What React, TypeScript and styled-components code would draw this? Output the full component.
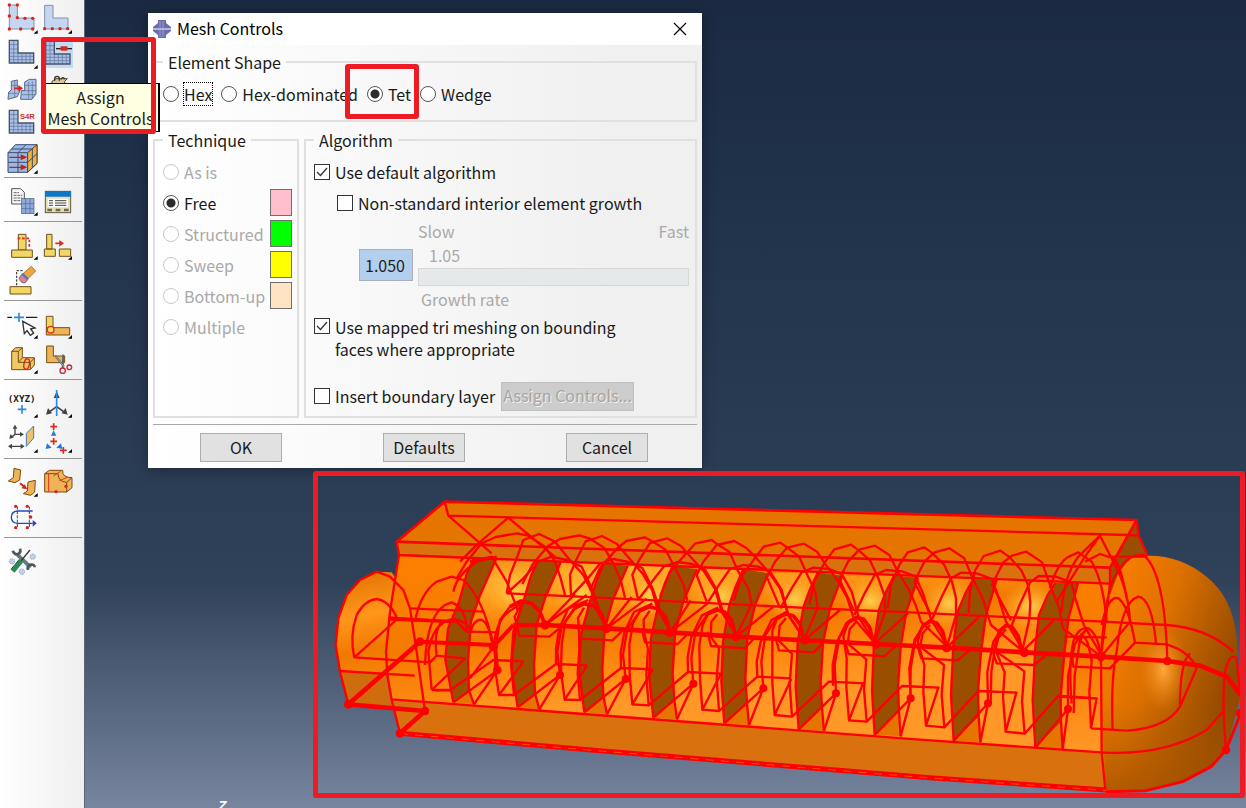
import React from 'react';
import styled, { createGlobalStyle, css } from 'styled-components';

const GlobalStyle = createGlobalStyle`
  * { box-sizing: border-box; }
  body {
    margin: 0;
    font-family: 'Noto Sans CJK SC', 'Noto Sans', sans-serif;
    font-size: 16px;
    line-height: 22px;
    color: #1a1a1a;
  }
  button, input { font: inherit; color: inherit; }
`;

const RED = '#ed1c24';
const EDGE = '#ff0000';

/* ---------- shell ---------- */

const Screen = styled.div`
  position: relative;
  display: flex;
  height: 100vh;
  overflow: hidden;
`;

const Toolbar = styled.nav`
  flex: none;
  width: 85px;
  padding: 0 4px;
  background: linear-gradient(90deg, #ffffff, #efefef);
  border-right: 1px solid #5b6577;
`;

const ToolGroup = styled.div<{ $first?: boolean; $last?: boolean }>`
  display: grid;
  grid-template-columns: 36px 36px;
  grid-auto-rows: 35px;
  width: 78px;
  padding: ${(p) => (p.$first ? '1px 0' : '5px 0 3px')};
  border-bottom: ${(p) => (p.$last ? 'none' : '1px solid #979797')};
`;

const ToolButton = styled.button<{ $active?: boolean }>`
  padding: 0;
  border: 0;
  background: ${(p) =>
    p.$active ? 'linear-gradient(#bfdcf5, #bfdcf5) 5px 4px / 28px 28px no-repeat' : 'none'};
`;

const ToolSvg = styled.svg`
  display: block;
  width: 36px;
  height: 35px;
`;

const Viewport = styled.main`
  position: relative;
  flex: 1;
  background: linear-gradient(180deg, #1b2a42 0%, #1f3049 20%, #2d3f57 65%, #304259 72%, #53637b 86%, #77869e 100%);
`;

const ModelSvg = styled.svg`
  position: absolute;
  left: 225px;
  top: 465px;
  width: 936px;
  height: 335px;
`;

const AxisLabel = styled.span`
  position: absolute;
  left: 133px;
  top: 797px;
  color: #f4f6fa;
  font: italic 700 14px/18px 'Liberation Sans', sans-serif;
`;

const Callout = styled.div<{ $x: number; $y: number; $w: number; $h: number }>`
  position: absolute;
  left: ${(p) => p.$x}px;
  top: ${(p) => p.$y}px;
  width: ${(p) => p.$w}px;
  height: ${(p) => p.$h}px;
  border: 5px solid ${RED};
  border-radius: 3px;
  pointer-events: none;
`;

const Tooltip = styled.div`
  position: absolute;
  left: 42px;
  top: 83px;
  width: 118px;
  padding: 3px 2px 2px;
  border: 1px solid #000;
  border-right-width: 2px;
  background: #ffffe1;
  text-align: center;
  line-height: 21px;
  white-space: nowrap;
`;

/* ---------- dialog ---------- */

const Dialog = styled.section`
  position: absolute;
  left: 63px;
  top: 13px;
  width: 554px;
  background: linear-gradient(90deg, #ffffff 0%, #fbfbfb 25%, #f0f0f0 85%);
  box-shadow: 0 2px 12px rgba(0, 0, 0, 0.35);
`;

const TitleBar = styled.header`
  display: flex;
  align-items: center;
  gap: 6px;
  height: 32px;
  padding: 0 15px 0 5px;
  background: #fff;
  color: #000;
`;

const Title = styled.h1`
  flex: 1;
  margin: 0;
  padding-bottom: 3px;
  font-size: 16px;
  font-weight: 400;
`;

const CloseButton = styled.button`
  display: flex;
  padding: 0;
  border: 0;
  background: none;
`;

const Body = styled.form`
  padding: 6px 5px;
`;

const Columns = styled.div`
  display: flex;
  gap: 5px;
  margin-top: 7px;
`;

const Group = styled.fieldset<{ $h: number; $w?: number }>`
  flex: ${(p) => (p.$w ? 'none' : '1')};
  width: ${(p) => (p.$w ? `${p.$w}px` : 'auto')};
  height: ${(p) => p.$h}px;
  min-width: 0;
  margin: 0;
  padding: 0 6px 0 9px;
  border: 2px solid #e0e0e0;
`;

const Legend = styled.legend`
  margin-left: -1px;
  padding: 0 5px;
`;

const ShapeRow = styled.div`
  display: flex;
  gap: 9px;
  margin-top: 10px;
  margin-left: -1px;
`;

const Choice = styled.label<{ $off?: boolean; $top?: boolean }>`
  display: flex;
  align-items: ${(p) => (p.$top ? 'flex-start' : 'center')};
  gap: 5px;
  color: ${(p) => (p.$off ? '#a9a9a9' : 'inherit')};
  white-space: nowrap;
`;

const FocusText = styled.span<{ $focus?: boolean }>`
  ${(p) => p.$focus && css`outline: 1px dotted #000;`}
`;

const Radio = styled.input.attrs({ type: 'radio' })`
  appearance: none;
  flex: none;
  width: 16px;
  height: 16px;
  margin: 0;
  border: 1px solid #555;
  border-radius: 50%;
  background: #fff;
  &:checked { background: radial-gradient(circle, #2b2b2b 4px, #fff 5px); }
  &:disabled { border-color: #c8c8c8; }
`;

const CheckBox = styled.input.attrs({ type: 'checkbox' })`
  appearance: none;
  flex: none;
  width: 16px;
  height: 16px;
  margin: 0;
  border: 1px solid #333;
  background: #fff;
`;

const CheckWrap = styled.span<{ $top?: boolean }>`
  display: grid;
  flex: none;
  margin-top: ${(p) => (p.$top ? '2px' : '0')};
  > * { grid-area: 1 / 1; }
`;

const TechRow = styled.div`
  display: flex;
  align-items: center;
  justify-content: space-between;
  height: 31px;
  margin-left: -1px;
`;

const TechList = styled.div`
  margin-top: 5px;
`;

const Swatch = styled.span<{ $c: string }>`
  width: 22px;
  height: 27px;
  margin-right: -1px;
  border: 1px solid #6f6f6f;
  background: ${(p) => p.$c};
`;

const AlgoRow = styled.div<{ $indent?: boolean; $h: number }>`
  display: flex;
  align-items: center;
  gap: 6px;
  height: ${(p) => p.$h}px;
  margin-left: ${(p) => (p.$indent ? '22px' : '-1px')};
`;

const Growth = styled.div`
  display: grid;
  grid-template-columns: 54px 1fr;
  column-gap: 5px;
  align-items: start;
  margin: 2px 0 0 44px;
  color: #a9a9a9;
`;

const GrowthValue = styled.input`
  width: 54px;
  height: 32px;
  margin-top: 29px;
  padding: 0 5px;
  border: 1px solid #a8b0ba;
  background: #b3cfee;
  color: #222;
`;

const Scale = styled.div`
  display: flex;
  flex-direction: column;
`;

const ScaleEnds = styled.div`
  display: flex;
  justify-content: space-between;
`;

const ScaleValue = styled.output`
  padding-left: 11px;
  line-height: 26px;
`;

const Range = styled.input.attrs({ type: 'range' })`
  appearance: none;
  width: 100%;
  height: 18px;
  margin: 0 0 2px;
  border: 1px solid #d6d8d8;
  background: #e5e9e9;
  &::-webkit-slider-thumb { appearance: none; width: 0; height: 0; }
`;

const ScaleName = styled.label`
  padding-left: 3px;
`;

const Mapped = styled.div`
  margin: 6px 0 0 -1px;
`;

const Push = styled.button<{ $wide?: boolean }>`
  width: ${(p) => (p.$wide ? '133px' : '82px')};
  height: 29px;
  padding: 0 0 2px;
  border: 1px solid #adadad;
  background: #e1e1e1;
  white-space: nowrap;
  &:disabled {
    border-color: #bfbfbf;
    background: #cccccc;
    color: #a5a5a5;
    text-shadow: 1px 1px 0 #f2f2f2;
  }
`;

const Footer = styled.footer`
  display: flex;
  justify-content: space-between;
  margin-top: 6px;
  padding: 8px 49px 0 47px;
  border-top: 1px solid #a8a8a8;
`;

function Check({ id, checked, top }: { id: string; checked?: boolean; top?: boolean }) {
  return (
    <CheckWrap $top={top}>
      <CheckBox id={id} defaultChecked={checked} />
      {checked && (
        <svg width="16" height="16" viewBox="0 0 16 16" pointerEvents="none">
          <path d="M3 8l3.500 3.500L13 4" fill="none" stroke="#333" strokeWidth="1.300" />
        </svg>
      )}
    </CheckWrap>
  );
}

const techniques = [
  { name: 'As is', off: true },
  { name: 'Free', color: '#ffc0cb' },
  { name: 'Structured', off: true, color: '#00ff00' },
  { name: 'Sweep', off: true, color: '#ffff00' },
  { name: 'Bottom-up', off: true, color: '#ffe4c4' },
  { name: 'Multiple', off: true },
];

function MeshControls() {
  return (
    <Dialog role="dialog" aria-label="Mesh Controls">
      <TitleBar>
        <svg width="18" height="18" viewBox="0 0 18 18">
          <path d="M5 0h8v3l5 4v1.400H0V7l5-4z" fill="#6d6cae" />
          <path d="M0 9.600h18V11l-5 4v3H5v-3l-5-4z" fill="#6d6cae" />
          <path d="M7 1v7M7 10v7M10 1v7M10 10v7" stroke="#9d9ccc" />
        </svg>
        <Title>Mesh Controls</Title>
        <CloseButton aria-label="Close">
          <svg width="14" height="14" viewBox="0 0 14 14">
            <path d="M1 1l12 12M13 1L1 13" stroke="#000" strokeWidth="1.200" />
          </svg>
        </CloseButton>
      </TitleBar>
      <Body>
        <Group $h={71}>
          <Legend>Element Shape</Legend>
          <ShapeRow>
            <Choice><Radio name="shape" /><FocusText $focus>Hex</FocusText></Choice>
            <Choice><Radio name="shape" />Hex-dominated</Choice>
            <Choice><Radio name="shape" defaultChecked />Tet</Choice>
            <Choice><Radio name="shape" />Wedge</Choice>
          </ShapeRow>
        </Group>
        <Columns>
          <Group $h={289} $w={146}>
            <Legend>Technique</Legend>
            <TechList>
              {techniques.map((t) => (
                <TechRow key={t.name}>
                  <Choice $off={t.off}>
                    <Radio name="technique" disabled={t.off} defaultChecked={t.name === 'Free'} />
                    {t.name}
                  </Choice>
                  {t.color && <Swatch $c={t.color} />}
                </TechRow>
              ))}
            </TechList>
          </Group>
          <Group $h={289}>
            <Legend>Algorithm</Legend>
            <TechList>
              <AlgoRow $h={31}>
                <Choice><Check id="default-algorithm" checked />Use default algorithm</Choice>
              </AlgoRow>
              <AlgoRow $h={31} $indent>
                <Choice><Check id="growth" />Non-standard interior element growth</Choice>
              </AlgoRow>
            </TechList>
            <Growth>
              <GrowthValue aria-label="Growth rate value" defaultValue="1.050" />
              <Scale>
                <ScaleEnds><span>Slow</span><span>Fast</span></ScaleEnds>
                <ScaleValue>1.05</ScaleValue>
                <Range id="rate" disabled defaultValue={5} />
                <ScaleName htmlFor="rate">Growth rate</ScaleName>
              </Scale>
            </Growth>
            <Mapped>
              <Choice $top>
                <Check id="mapped" checked top />
                <span>Use mapped tri meshing on bounding<br />faces where appropriate</span>
              </Choice>
            </Mapped>
            <AlgoRow $h={72}>
              <Choice><Check id="boundary" />Insert boundary layer</Choice>
              <Push type="button" $wide disabled>Assign Controls...</Push>
            </AlgoRow>
          </Group>
        </Columns>
        <Footer>
          <Push type="button">OK</Push>
          <Push type="button">Defaults</Push>
          <Push type="button">Cancel</Push>
        </Footer>
      </Body>
    </Dialog>
  );
}

/* ---------- toolbar icons ---------- */

function Tool({ label, x, y, menu, active, children }: {
  label: string; x: number; y: number; menu?: boolean; active?: boolean; children?: React.ReactNode;
}) {
  const mx = x + (x > 100 ? 96 : 101);
  const my = y + 98;
  return (
    <ToolButton aria-label={label} $active={active}>
      <ToolSvg viewBox={`${x} ${y} 108 105`}>
        {children}
        {menu && <path d={`M${mx} ${my}v-11l-12 11z`} fill="#000" />}
      </ToolSvg>
    </ToolButton>
  );
}

const Dots = ({ at }: { at: number[][] }) => (
  <>{at.map(([x, y]) => <circle key={`${x} ${y}`} cx={x} cy={y} r="5" fill="#d8231a" />)}</>
);

const MeshL = ({ x, y }: { x: number; y: number }) => (
  <g transform={`translate(${x} ${y})`}>
    <path d="M0 0h26v38h47v30H0z" fill="#a9c0e8" />
    <path d="M13 0v68M26 38v30M38 38v30M50 38v30M62 38v30M0 13h26M0 26h26M0 38h26M0 48h73M0 58h73" stroke="#5a7099" strokeWidth="2" />
    <path d="M0 0h26v38h47v30H0z" fill="none" stroke="#4b5266" strokeWidth="4" />
  </g>
);

const gold = { fill: '#f3d663', stroke: '#6a5320', strokeWidth: 3 };
const tan = { fill: '#efb458', stroke: '#7a4c12', strokeWidth: 3 };

function Tools() {
  return (
    <Toolbar aria-label="Mesh tools">
      <ToolGroup $first>
        <Tool label="Seed part" x={12} y={3} menu>
          <path d="M28 15h24v39h50v33H28z" fill="#c6d6f0" stroke="#8291ad" strokeWidth="3" />
          <Dots at={[[28, 15], [52, 15], [28, 48], [52, 53], [75, 55], [98, 55], [98, 87], [62, 87], [28, 87]]} />
        </Tool>
        <Tool label="Seed edges" x={120} y={3} menu>
          <path d="M134 16h25v38h45v33H134z" fill="#c6d6f0" stroke="#8291ad" strokeWidth="3" />
          <Dots at={[[134, 86], [157, 86], [180, 86], [203, 86]]} />
        </Tool>
        <Tool label="Mesh part" x={12} y={108} menu><MeshL x={28} y={121} /></Tool>
        <Tool label="Assign mesh controls" x={120} y={108} active>
          <MeshL x={137} y={124} />
          <path d="M168 146h48" stroke="#222" strokeWidth="4" />
          <rect x="181" y="139" width="22" height="13" rx="4" fill="#e0261b" />
        </Tool>
        <Tool label="Copy mesh" x={12} y={213}>
          <path d="M34 244l18-4v28l8 4-8 18-28 8 2-22 8-6z" fill="#a9c0e8" stroke="#5a6985" strokeWidth="3" />
          <path d="M74 246l14-8h20v44l-12 16H62l2-26h10z" fill="#a9c0e8" stroke="#5a6985" strokeWidth="3" />
          <path d="M86 246v50M97 244v52M74 256h34M64 272h44M64 284h42M44 242v50M34 256h18M26 280h30" stroke="#5a6985" strokeWidth="2" />
          <path d="M42 265h16" stroke="#d8231a" strokeWidth="5" />
          <path d="M55 255l14 10-14 10z" fill="#d8231a" />
        </Tool>
        <Tool label="Lock mesh" x={120} y={213}>
          <path d="M156 244l12-8h34l-8 8v20h-38z" fill="#d9c59a" stroke="#5a4820" strokeWidth="3" />
          <path d="M164 242v-6q0-7 7-7t7 7v6M182 238q8-10 12 0" fill="none" stroke="#333" strokeWidth="4" />
        </Tool>
        <Tool label="Element type" x={12} y={318}>
          <MeshL x={28} y={331} />
          <text x="60" y="358" fontSize="23" fontFamily="Liberation Sans" fontWeight="700" fill="#d93025">S4R</text>
        </Tool>
        <span />
        <Tool label="Stack direction" x={12} y={423} menu>
          <path d="M24 458l22-24h65v56l-28 27H24z" fill="#9bb7e6" stroke="#3b4d70" strokeWidth="3" />
          <path d="M83 458l28-24v56l-28 27z" fill="#f0b347" stroke="#5a3d10" strokeWidth="3" />
          <path d="M24 458h59M24 487h59l28-26M54 458v59M54 458l24-24M97 446v58M34 447h61" fill="none" stroke="#3b4d70" strokeWidth="3" />
          <path d="M28 472h38M28 502h38" stroke="#c22115" strokeWidth="4" />
          <path d="M62 463l20 9-20 9zM62 493l20 9-20 9z" fill="#c22115" />
        </Tool>
      </ToolGroup>
      <ToolGroup>
        <Tool label="Mesh to part" x={12} y={21} menu>
          <path d="M35 38h27l11 11v35H35z" fill="#f7f7f7" stroke="#555" strokeWidth="3" />
          <path d="M41 50h16M41 58h26M41 66h26M41 74h20" stroke="#666" strokeWidth="3" strokeDasharray="9 2" />
          <rect x="65" y="68" width="37" height="45" fill="#8fabdc" stroke="#42587c" strokeWidth="2" />
          <path d="M77 68v45M90 68v45M65 83h37M65 98h37" stroke="#4f6796" strokeWidth="2" />
        </Tool>
        <Tool label="Mesh manager" x={120} y={21}>
          <rect x="136" y="46" width="76" height="64" fill="#e3dcb0" stroke="#5c5a45" strokeWidth="3" />
          <rect x="135" y="45" width="78" height="17" rx="3" fill="#0f78c6" />
          <rect x="143" y="68" width="61" height="26" fill="#fff" />
          <path d="M147 74h12M147 81h12M147 88h12M165 74h34M165 81h34M165 88h34" stroke="#444" strokeWidth="3" />
          <path d="M142 102h14M167 102h14M192 102h14" stroke="#6b6852" strokeWidth="8" />
        </Tool>
      </ToolGroup>
      <ToolGroup>
        <Tool label="Create boundary" x={12} y={153} menu>
          <path d="M55 175h23v47H55z" {...gold} />
          <path d="M35 222h62v22H35z" {...gold} />
          <path d="M53 187h35v30" fill="none" stroke="#dc2a1d" strokeWidth="5" strokeDasharray="8 5" />
        </Tool>
        <Tool label="Split" x={120} y={153} menu>
          <path d="M140 175h16v44h-16zM133 219h33v22h-33zM178 219h34v22h-34z" {...gold} />
          <path d="M166 202h14" stroke="#dc2a1d" strokeWidth="5" />
          <path d="M178 192l14 10-14 10z" fill="#dc2a1d" />
        </Tool>
        <Tool label="Delete" x={12} y={258}>
          <path d="M50 328v-44h22" fill="none" stroke="#222" strokeWidth="3" strokeDasharray="7 4" />
          <path d="M30 332h63v22H30z" {...gold} />
          <path d="M70 292l24-21 13 14-24 24z" fill="#efa53e" stroke="#8a5a1a" strokeWidth="2" />
          <path d="M58 304l8-9 18 15-8 10q-6 3-13-3-7-6-5-13z" fill="#d98394" stroke="#6b3a48" strokeWidth="2" />
          <path d="M66 293l18 17" stroke="#5a74b8" strokeWidth="7" />
        </Tool>
      </ToolGroup>
      <ToolGroup>
        <Tool label="Partition edge" x={12} y={390} menu>
          <path d="M22 424h14M78 424h34" stroke="#222" strokeWidth="4" />
          <path d="M42 424h30M57 410v28" stroke="#2d8ae2" strokeWidth="5" />
          <path d="M68 436l5 37 8-9 10 14 10-7-9-12 13-3z" fill="#fff" stroke="#333" strokeWidth="4" />
        </Tool>
        <Tool label="Partition face" x={120} y={390} menu>
          <path d="M139 421h20v34h-20z" {...gold} />
          <path d="M139 455h70v22h-70z" {...tan} />
          <circle cx="152" cy="461" r="10" fill="#f3d663" stroke="#e0341f" strokeWidth="4" />
        </Tool>
        <Tool label="Partition cell" x={12} y={495} menu>
          <path d="M35 526l12-11h20v30h36v22l-12 14H35z" {...tan} fill="#efc765" />
          <path d="M35 526h20v33h36v20M55 526l12-11M55 559l12-13M91 559l12-13" fill="none" stroke="#7a4c12" strokeWidth="3" />
          <ellipse cx="80" cy="564" rx="8" ry="16" fill="none" stroke="#d8231a" strokeWidth="4" transform="rotate(12 80 564)" />
        </Tool>
        <Tool label="Cut" x={120} y={495}>
          <path d="M140 510h20v30h34v20h-54z" {...tan} />
          <path d="M165 538l27 34M190 536l-2 40" stroke="#59626e" strokeWidth="6" />
          <path d="M165 538l27 34" stroke="#c8d0d8" strokeWidth="2" />
          <circle cx="188" cy="584" r="8" fill="none" stroke="#c92a35" strokeWidth="4" />
          <circle cx="208" cy="574" r="7" fill="none" stroke="#c92a35" strokeWidth="4" />
        </Tool>
      </ToolGroup>
      <ToolGroup>
        <Tool label="Datum point" x={12} y={27} menu>
          <text x="23" y="77" fontSize="28" fontWeight="700" fontFamily="DejaVu Sans Mono" fill="#222">(XYZ)</text>
          <path d="M53 100h26M66 87v26" stroke="#2d8ae2" strokeWidth="5" />
        </Tool>
        <Tool label="Datum axis" x={120} y={27} menu>
          <path d="M170 92l-28 20M170 92l28 20" stroke="#444" strokeWidth="5" />
          <path d="M170 46l9 20h-18zM138 116l6-20 12 16zM203 116l-6-20-12 16z" fill="#444" />
          <path d="M170 42v78" stroke="#2d8ae2" strokeWidth="5" />
        </Tool>
        <Tool label="Datum plane" x={12} y={132} menu>
          <path d="M45 175v-22M45 175h22M45 175l-12 10M30 211h38" stroke="#444" strokeWidth="4" />
          <path d="M45 146l7 12H38zM72 175l-12 7v-14zM28 189l3-14 11 9zM24 211l12-8v16zM74 211l-12-8v16z" fill="#444" />
          <path d="M79 172l22-22v36l-22 25z" fill="#edc36c" stroke="#3a7fc4" strokeWidth="3" />
        </Tool>
        <Tool label="Datum system" x={120} y={132} menu>
          <path d="M151 152h20M161 142v20M151 196h20M161 186v20M180 223h20M190 213v20" stroke="#e0291d" strokeWidth="5" />
          <path d="M161 163l8 16h-16zM137 219l4-17 14 13zM187 219l-4-17-14 13z" fill="#2678d8" />
        </Tool>
      </ToolGroup>
      <ToolGroup>
        <Tool label="Edit mesh" x={12} y={264} menu>
          <path d="M42 277l20 5-3 30-14 8-20-5 15-10z" {...tan} />
          <path d="M84 318l22-5-2 35-12 10-22-5 12-8z" {...tan} />
          <path d="M60 322l14 11" stroke="#d8231a" strokeWidth="6" />
          <path d="M82 340l-18-3 10-12z" fill="#d8231a" />
        </Tool>
        <Tool label="Virtual topology" x={120} y={264}>
          <path d="M134 293l14-10h40q-2 22 28 22v30l-16 13h-66z" {...tan} />
          <path d="M134 293h40q0 24 26 26v29M200 319l16-14" fill="none" stroke="#7a4c12" strokeWidth="3" />
          <path d="M146 293v55M160 300l22-14M178 314l24-10" stroke="#e0341f" strokeWidth="3" />
          <Dots at={[[168, 347], [198, 331]]} />
        </Tool>
        <Tool label="Verify" x={12} y={369}>
          <path d="M98 405H52q-18 2-18 19t18 18h46" fill="none" stroke="#2448b8" strokeWidth="4" />
          <path d="M52 392v62M88 392v62" stroke="#444" strokeWidth="3" strokeDasharray="9 4" />
          <path d="M98 432l12 10-12 10z" fill="#2448b8" />
          <Dots at={[[47, 391], [82, 391], [92, 423], [47, 455], [82, 455]]} />
        </Tool>
      </ToolGroup>
      <ToolGroup $last>
        <Tool label="Tools" x={12} y={501}>
          <circle cx="98" cy="542" r="8" fill="#c4d0ea" stroke="#8a9abf" strokeWidth="3" strokeDasharray="4 3" />
          <circle cx="36" cy="556" r="8" fill="#c4d0ea" stroke="#8a9abf" strokeWidth="3" strokeDasharray="4 3" />
          <circle cx="66" cy="587" r="8" fill="#c4d0ea" stroke="#8a9abf" strokeWidth="3" strokeDasharray="4 3" />
          <path d="M52 536l40 38" stroke="#66777d" strokeWidth="11" />
          <path d="M38 524q6 14 16 10t6-16M84 582q-4-14 8-16t12 8" fill="none" stroke="#4c5a60" strokeWidth="8" />
          <path d="M90 522l-28 34" stroke="#333" strokeWidth="4" />
          <path d="M64 554l-26 32" stroke="#2f8a52" strokeWidth="14" />
          <path d="M58 550l-25 30" stroke="#1c5a34" strokeWidth="3" />
        </Tool>
      </ToolGroup>
    </Toolbar>
  );
}

/* ---------- ribbed part in the viewport ---------- */

type P = [number, number];

/* Outline of one bay of the part at bays 1, 4 and 7, relative to its fin foot. */
const BAY_KEYS = [1, 4, 7];
const FEET: P[] = [
  [430, 712], [623, 727], [823, 742], [1030, 758], [1243, 775], [1466, 793], [1694, 810], [1931, 828], [2176, 848],
];
const KEY_ORIGIN: P[] = [[623, 727], [373, 775], [113, 828]];

const bay: Record<string, P[][]> = {
  finLeft: [
    [[623, 727], [603, 600], [610, 500], [640, 410], [662, 335], [683, 288]],
    [[373, 775], [364, 650], [369, 530], [388, 420], [405, 370], [430, 312]],
    [[113, 828], [105, 690], [112, 540], [125, 440], [148, 385], [172, 342]],
  ],
  finRight: [
    [[752, 292], [705, 400], [680, 480], [672, 600], [675, 685]],
    [[505, 325], [465, 420], [442, 520], [436, 640], [441, 715]],
    [[242, 345], [210, 450], [195, 560], [186, 680], [188, 755]],
  ],
  finHeel: [[[675, 685], [688, 733]], [[441, 715], [447, 780]], [[188, 755], [193, 832]]],
  strut: [
    [[623, 727], [750, 630], [688, 733]],
    [[373, 775], [490, 670], [447, 780]],
    [[113, 828], [216, 715], [193, 832]],
  ],
  ledge: [
    [[567, 690], [612, 690], [738, 597], [832, 601]],
    [[307, 734], [357, 738], [472, 635], [573, 640]],
    [[30, 782], [85, 787], [187, 678], [300, 683]],
  ],
  slot: [
    [[640, 590], [567, 690], [555, 610], [558, 540], [570, 465], [600, 425], [632, 408], [665, 415], [690, 440], [705, 480]],
    [[362, 628], [307, 734], [300, 640], [298, 540], [308, 480], [325, 445], [352, 435], [375, 442], [395, 465], [408, 515]],
    [[68, 665], [30, 782], [22, 680], [25, 600], [5, 530], [18, 485], [42, 468], [62, 474], [80, 500], [92, 548]],
  ],
  slotSide: [
    [[612, 690], [605, 620], [608, 560], [620, 480], [614, 455], [632, 420]],
    [[357, 738], [350, 640], [357, 550], [332, 515], [334, 470], [352, 448]],
    [[85, 787], [77, 690], [84, 600], [12, 545], [20, 505], [42, 480]],
  ],
  pocket: [
    [[620, 480], [628, 512], [718, 515], [748, 490]],
    [[322, 500], [333, 543], [435, 550], [460, 522]],
    [[5, 545], [16, 580], [125, 586], [165, 552]],
  ],
  ribs: [
    [[750, 630], [742, 560], [755, 485], [795, 430], [830, 412]],
    [[490, 670], [484, 590], [496, 510], [530, 460], [560, 448]],
    [[216, 715], [214, 620], [232, 530], [255, 495], [278, 478]],
  ],
  ribsBack: [
    [[738, 597], [738, 550], [748, 490], [775, 430], [835, 405]],
    [[472, 635], [470, 590], [482, 530], [515, 465], [560, 440]],
    [[224, 715], [226, 620], [240, 530], [258, 490], [278, 478]],
  ],
  fan: [
    [[795, 387], [705, 480], [830, 390]],
    [[455, 417], [408, 515], [520, 425]],
    [[120, 450], [92, 548], [190, 455]],
  ],
  archFront: [
    [[440, 340], [470, 290], [515, 235], [557, 216], [620, 205], [655, 212], [705, 245], [735, 290], [752, 340], [765, 390]],
    [[180, 395], [210, 320], [262, 262], [285, 236], [335, 225], [355, 240], [388, 260], [415, 320], [445, 370], [455, 417]],
    [[-85, 430], [-75, 360], [-50, 300], [-25, 262], [25, 247], [50, 265], [85, 300], [108, 350], [120, 400], [120, 450]],
  ],
  archRear: [
    [[590, 385], [600, 330], [620, 280], [640, 225], [687, 207], [735, 230], [775, 280], [820, 330], [845, 380], [855, 425], [890, 490]],
    [[320, 410], [290, 330], [310, 290], [350, 240], [403, 228], [440, 250], [465, 275], [505, 320], [540, 370], [565, 450], [615, 525]],
    [[45, 450], [-5, 350], [25, 290], [55, 262], [100, 250], [145, 280], [172, 345], [200, 400], [215, 450], [225, 480], [325, 562]],
  ],
  archInner: [
    [[590, 385], [640, 340], [685, 290], [725, 275], [770, 285], [815, 305], [845, 370], [870, 440], [890, 490]],
    [[325, 410], [360, 355], [390, 312], [430, 300], [475, 305], [510, 320], [545, 375], [565, 450], [615, 525]],
    [[45, 470], [75, 400], [105, 340], [135, 323], [185, 326], [228, 342], [245, 390], [270, 470], [325, 562]],
  ],
};

function shape(name: string, i: number): P[] {
  const k = i < 4 ? 0 : 1;
  const t = (i - BAY_KEYS[k]) / 3;
  return bay[name][k].map((p, n) => {
    const q = bay[name][k + 1][n];
    const a = KEY_ORIGIN[k];
    const b = KEY_ORIGIN[k + 1];
    const x = (p[0] - a[0]) * (1 - t) + (q[0] - b[0]) * t;
    const y = (p[1] - a[1]) * (1 - t) + (q[1] - b[1]) * t;
    return [Math.round(FEET[i][0] + x), Math.round(FEET[i][1] + y)];
  });
}

const pts = (p: P[]) => p.map((q) => q.join(',')).join(' ');

const LINES = ['finLeft', 'finRight', 'finHeel', 'strut', 'ledge'];
const ARCHES = ['slot', 'slotSide', 'pocket', 'ribs', 'ribsBack', 'fan', 'archFront', 'archRear', 'archInner'];

const NODES: P[] = [
  [550, 545], [705, 480], [890, 490], [1080, 502], [1278, 515], [1485, 525], [1698, 537], [1910, 548], [2143, 562], [2373, 575],
];

function Model() {
  const bays = FEET.map((_, i) => i);
  return (
    <ModelSvg viewBox="0 0 2808 1005" aria-label="Part model" role="img">
      <defs>
        <linearGradient id="front" gradientUnits="userSpaceOnUse" x1="0" y1="280" x2="0" y2="860">
          <stop offset="0" stopColor="#fd8000" />
          <stop offset="0.5" stopColor="#f47b00" />
          <stop offset="0.8" stopColor="#ff8c18" />
          <stop offset="1" stopColor="#ff9826" />
        </linearGradient>
        <linearGradient id="bore" gradientUnits="userSpaceOnUse" x1="0" y1="290" x2="40" y2="780">
          <stop offset="0" stopColor="#e88007" />
          <stop offset="0.2" stopColor="#ffae2c" />
          <stop offset="0.36" stopColor="#ff9616" />
          <stop offset="0.55" stopColor="#f27900" />
          <stop offset="0.8" stopColor="#ff8a12" />
          <stop offset="1" stopColor="#ff9826" />
        </linearGradient>
        <radialGradient id="glow">
          <stop offset="0" stopColor="#ffd24e" stopOpacity="0.95" />
          <stop offset="1" stopColor="#ffb030" stopOpacity="0" />
        </radialGradient>
        <linearGradient id="cap" x1="0" y1="0" x2="0.15" y2="1">
          <stop offset="0" stopColor="#df7000" />
          <stop offset="0.35" stopColor="#ff961a" />
          <stop offset="0.6" stopColor="#f07900" />
          <stop offset="1" stopColor="#ff8e1a" />
        </linearGradient>
        <linearGradient id="dome" gradientUnits="userSpaceOnUse" x1="2390" y1="480" x2="2780" y2="610">
          <stop offset="0" stopColor="#f67d00" />
          <stop offset="0.4" stopColor="#dc7000" />
          <stop offset="0.7" stopColor="#b55c00" />
          <stop offset="1" stopColor="#924900" />
        </linearGradient>
        <radialGradient id="domeGlow">
          <stop offset="0" stopColor="#ffa83c" />
          <stop offset="1" stopColor="#f08410" stopOpacity="0" />
        </radialGradient>
        <linearGradient id="domeBase" x1="0" y1="0" x2="0" y2="1">
          <stop offset="0" stopColor="#b45b00" stopOpacity="0" />
          <stop offset="1" stopColor="#a85500" />
        </linearGradient>
      </defs>

      {/* shaded faces */}
      <path d="M200 320L150 345 110 390 85 460 77 540 90 620 115 718 345 738 330 560 300 400 245 322z" fill="url(#cap)" />
      <path d="M90 620L314 632 340 735 115 718z" fill="#cf6c0e" />
      <path d="M2513 272Q2610 270 2690 335T2780 520L2790 700 2748 855 2703 905 2618 950 2508 977 2388 980 2373 862V575L2400 330 2440 262z" fill="url(#dome)" />
      <path d="M2373 700H2780L2748 855 2703 905 2618 950 2508 977 2388 980z" fill="url(#domeBase)" opacity="0.800" />
      <ellipse cx="2560" cy="615" rx="72" ry="125" fill="url(#domeGlow)" />
      <path d="M267 270L2400 356 2373 575 2373 862 1818 823 245 705 228 560 240 440z" fill="url(#front)" />
      <path d="M245 703L1818 823 2373 862 2388 975 1860 938 870 857 270 805z" fill="#d9720e" />
      <path d="M404 110L2480 165 2400 308 260 230z" fill="#e67500" />
      <path d="M260 230L2400 308V356L267 270z" fill="#d9720e" />
      <path d="M2480 165L2486 212 2513 272 2460 280 2425 325 2400 390V308z" fill="#9a4e00" />

      {bays.slice(0, 8).map((i) => {
        const right = [...shape('finRight', i), shape('finHeel', i)[1]];
        const next = shape('finLeft', i + 1);
        const c = next[3];
        const id = `bore-${i}`;
        return (
          <g key={i}>
            <clipPath id={id}><polygon points={pts([...right, ...next])} /></clipPath>
            <polygon points={pts([...right, ...next])} fill="url(#bore)" />
            <ellipse cx={c[0] - 25} cy={c[1] - 25} rx="90" ry="75" fill="url(#glow)" clipPath={`url(#${id})`} />
          </g>
        );
      })}
      {bays.map((i) => (
        <g key={i}>
          <polygon points={pts([FEET[i], shape('finRight', i)[4], shape('finHeel', i)[1]])} fill="#e67500" />
          <polygon points={pts([...shape('finLeft', i), ...shape('finRight', i)])} fill="#9a4e00" />
        </g>
      ))}

      {/* feature edges */}
      <g fill="none" stroke={EDGE} strokeWidth="7" strokeLinejoin="round">
        {bays.map((i) => LINES.map((n) => <polyline key={`${n}${i}`} points={pts(shape(n, i))} />))}
        {bays.slice(1).map((i) => ARCHES.map((n) => <polyline key={`${n}${i}`} points={pts(shape(n, i))} />))}
        {bays.slice(1).map((i) => <polyline key={i} points={pts(shape('slot', i).slice(5))} strokeWidth="11" />)}

        <path d="M404 110L2480 165 2400 308 260 230z" strokeWidth="8" />
        <path d="M404 110L415 152 2453 210 2486 212M415 152L545 265M2480 165L2486 212 2513 272M260 230L267 270 2400 356V308M2400 275h112" />
        <path d="M267 270L240 440 228 560 232 630 245 705 270 805M245 703L1818 823 2373 862Q2560 874 2690 795L2740 738" />
        <path d="M595 158L505 235 450 290M595 158L740 280M480 290L545 275 590 350 625 440" />

        {/* left cap */}
        <path d="M115 718L90 620 77 540 85 460 110 390 150 345 200 320 240 335 280 375 300 430 320 560 345 738" />
        <path d="M133 577Q118 515 140 450 165 405 200 402 240 408 262 462L133 577 360 592M90 618L314 632M235 457L440 470 470 500 560 502M300 430L520 440" />
        <path d="M315 470Q330 385 380 350L425 335 460 345Q520 400 550 540M345 600Q350 430 425 412 470 430 470 500M365 675L355 560Q370 470 430 462 465 465 485 500M365 675H420M365 675L465 580 380 572 360 592M380 572Q370 500 395 470M480 505Q490 465 512 464 535 470 545 530" />
        <path d="M550 545Q560 470 590 445L640 410M430 380Q440 330 500 290L560 275M480 640L555 540" />

        {/* long edges through the bays */}
        <path d="M590 385L870 398 1470 428 1818 443 2380 470 2570 480Q2690 488 2770 560" />
        <path d="M240 462L430 470" strokeWidth="10" />
        <path d="M610 480L705 480 890 490 1278 515 1698 537 1910 548 2143 562 2373 575 2572 588 2670 602 2750 635 2792 690" strokeWidth="14" />
        <path d="M330 530L550 540 550 545 610 480M555 545L562 620" strokeWidth="12" />
        <path d="M115 718L330 530M115 718L345 738 270 805" strokeWidth="14" />
        <path d="M270 805L870 857 1860 938 2388 975" strokeWidth="15" />
        <path d="M2388 980L2508 977 2618 950 2703 905 2748 855 2792 745" strokeWidth="9" />

        {/* right end */}
        <path d="M2255 440Q2262 330 2305 275L2370 212 2410 290Q2455 370 2460 470L2373 575M2370 212L2325 275 2240 410M2220 370Q2240 300 2272 277L2305 262 2345 290Q2380 350 2390 470M2325 290L2370 267 2410 280Q2430 290 2450 400" />
        <path d="M2373 575L2400 356M2373 575Q2385 360 2430 310 2460 265 2500 270 2565 320 2572 588M2373 575L2375 862 2386 975M2408 795Q2402 640 2420 560 2435 410 2485 395 2525 400 2538 533M2375 480Q2395 390 2425 400 2455 420 2475 533L2400 610 2290 605 2285 560M2475 533L2570 538Q2640 560 2660 610L2610 725Q2610 590 2640 565" />
        <path d="M2343 790L2338 680 2345 590Q2330 490 2305 520M2343 790L2450 797Q2570 790 2610 725M2343 790L2360 700 2243 692M2263 515L2390 517" />
        <path d="M2748 855Q2735 700 2745 620 2760 560 2780 580L2790 690M2285 715Q2275 600 2290 530 2305 485 2335 490 2365 510 2373 575" />
      </g>
      <path d="M270 806L870 858 1860 939 2388 976" fill="none" stroke="#ff5000" strokeWidth="3" strokeDasharray="24 22" />
      <g fill={EDGE}>
        {NODES.map(([x, y]) => <circle key={x} cx={x} cy={y} r="14" />)}
        {bays.slice(1).map((i) => {
          const [x, y] = shape('strut', i)[1];
          return <circle key={i} cx={x} cy={y} r="12" />;
        })}
        {[[115, 718], [345, 738], [270, 805], [330, 530], [562, 615], [2572, 588], [2748, 855], [2790, 745]].map(([x, y]) => (
          <circle key={x} cx={x} cy={y} r="13" />
        ))}
      </g>
    </ModelSvg>
  );
}

export default function App() {
  return (
    <>
      <GlobalStyle />
      <Screen>
        <Tools />
        <Viewport>
          <AxisLabel>Z</AxisLabel>
          <Model />
          <MeshControls />
        </Viewport>
        <Tooltip role="tooltip">Assign<br />Mesh Controls</Tooltip>
        <Callout $x={41} $y={37} $w={115} $h={97} />
        <Callout $x={345} $y={64} $w={74} $h={55} />
        <Callout $x={313} $y={471} $w={932} $h={327} />
      </Screen>
    </>
  );
}
